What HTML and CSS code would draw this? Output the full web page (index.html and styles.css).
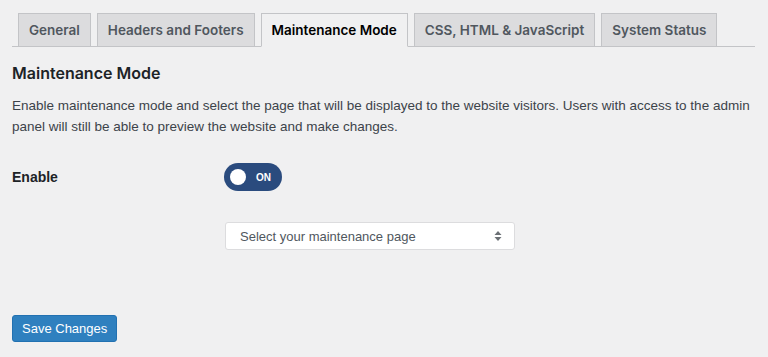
FILE: index.html
```html
<!DOCTYPE html>
<html lang="en">
  <head>
    <meta charset="UTF-8" />
    <meta name="viewport" content="width=device-width, initial-scale=1.0" />
    <title>Maintenance Mode</title>
    <link rel="stylesheet" href="styles.css">
  </head>
  <body>
    <nav class="tabs">
      <a class="tab" href="#">General</a>
      <a class="tab" href="#">Headers and Footers</a>
      <a class="tab active" href="#">Maintenance Mode</a>
      <a class="tab" href="#">CSS, HTML &amp; JavaScript</a>
      <a class="tab" href="#">System Status</a>
    </nav>
    <section class="panel">
      <h2>Maintenance Mode</h2>
      <p class="intro">
        Enable maintenance mode and select the page that will be displayed to the website visitors. Users with access to the admin panel will still be able to preview the website and make changes.
      </p>
      <div class="row">
        <label class="rowLabel">Enable</label>
        <span class="toggle">
          <span class="knob"></span>
          <span class="toggleText">ON</span>
        </span>
      </div>
      <div class="row">
        <span class="rowLabel"></span>
        <div class="select">
          <span>Select your maintenance page</span>
          <svg width="8" height="12" viewBox="0 0 8 12">
            <path d="M4 1 L7.5 5 H0.5 Z M4 11 L7.5 7 H0.5 Z" fill="#6b7075" />
          </svg>
        </div>
      </div>
      <button class="saveBtn">Save Changes</button>
    </section>
  </body>
</html>
```

FILE: styles.css
```css
body {
  margin: 0;
  background: #f0f0f1;
  font-family: "Liberation Sans", Arial, sans-serif;
  color: #1d2327;
}
.tabs {
  display: flex;
  gap: 6px;
  margin: 0 13px 0 12px;
  padding: 13px 0 0 6px;
  border-bottom: 1px solid #c3c4c7;
}
.tab {
  display: block;
  white-space: nowrap;
  padding: 0 10px;
  height: 32px;
  line-height: 32px;
  margin-bottom: -1px;
  background: #dcdcde;
  border: 1px solid #c3c4c7;
  border-bottom: none;
  color: #50575e;
  font-family: Inter, "Liberation Sans", sans-serif;
  font-size: 13.5px;
  font-weight: 600;
  text-decoration: none;
}
.tab.active {
  background: #f0f0f1;
  color: #000;
  border-bottom: 1px solid #f0f0f1;
}
.panel {
  padding: 0 12px;
}
h2 {
  font-family: Inter, "Liberation Sans", sans-serif;
  font-size: 16px;
  font-weight: 600;
  margin: 16px 0 0;
  color: #1d2327;
}
.intro {
  font-size: 13.5px;
  line-height: 21px;
  color: #3c434a;
  margin: 12px 0 26px;
}
.row {
  display: flex;
  align-items: center;
  margin-bottom: 31px;
}
.rowLabel {
  width: 212px;
  font-size: 14px;
  font-weight: bold;
}
.toggle {
  display: flex;
  align-items: center;
  width: 58px;
  height: 28px;
  border-radius: 14px;
  background: #2a4b7e;
  box-sizing: border-box;
  padding-left: 6px;
}
.knob {
  width: 16px;
  height: 16px;
  border-radius: 50%;
  background: #fff;
}
.toggleText {
  color: #fff;
  font-size: 10px;
  font-weight: bold;
  margin-left: 10px;
}
.select {
  display: flex;
  align-items: center;
  justify-content: space-between;
  width: 290px;
  height: 28px;
  box-sizing: border-box;
  padding: 0 12px 0 14px;
  margin-left: 1px;
  background: #fff;
  border: 1px solid #dcdcde;
  border-radius: 3px;
  font-size: 13px;
  color: #50575e;
}
.saveBtn {
  margin-top: 34px;
  height: 27px;
  padding: 0 9px;
  background: #2f80bf;
  border: 1px solid #2271b1;
  border-radius: 3px;
  color: #fff;
  font-family: inherit;
  font-size: 13px;
}
```
